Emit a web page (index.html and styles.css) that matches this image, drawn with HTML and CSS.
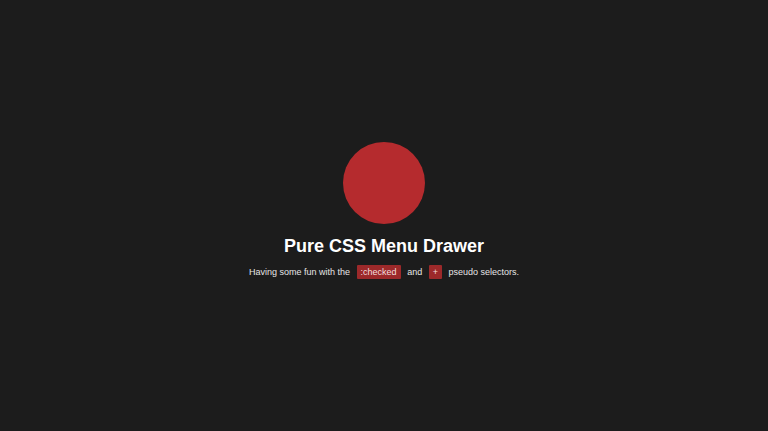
FILE: index.html
```html
<!DOCTYPE html>
<html lang="en">
<head>
<meta charset="utf-8">
<title>Pure CSS Menu Drawer</title>
<link rel="stylesheet" href="styles.css">
</head>
<body>
<main class="intro">
  <div class="burger"></div>
  <h1 class="title">Pure CSS Menu Drawer</h1>
  <p class="lead">Having some fun with the <code class="tag">:checked</code> and <code class="tag">+</code> pseudo selectors.</p>
</main>
</body>
</html>
```
FILE: styles.css
```css
html, body {
  margin: 0;
  padding: 0;
  height: 100%;
}
body {
  background: #1c1c1c;
  font-family: "Liberation Sans", Arial, sans-serif;
  color: #eeeeee;
}
.intro {
  display: flex;
  flex-direction: column;
  align-items: center;
  padding-top: 142px;
}
.burger {
  width: 82px;
  height: 82px;
  border-radius: 50%;
  background: #b52b2e;
}
.title {
  margin: 12px 0 0;
  font-size: 18px;
  font-weight: bold;
  line-height: 21px;
  color: #ffffff;
}
.lead {
  margin: 8px 0 0;
  font-size: 9px;
  line-height: 14px;
  color: #e6e6e6;
}
.tag {
  display: inline-block;
  font-family: "Liberation Sans", Arial, sans-serif;
  font-size: 9px;
  line-height: 14px;
  padding: 0 4px;
  margin: 0 4px;
  background: #9c292a;
  color: #f3dede;
  border-radius: 1px;
}
```
